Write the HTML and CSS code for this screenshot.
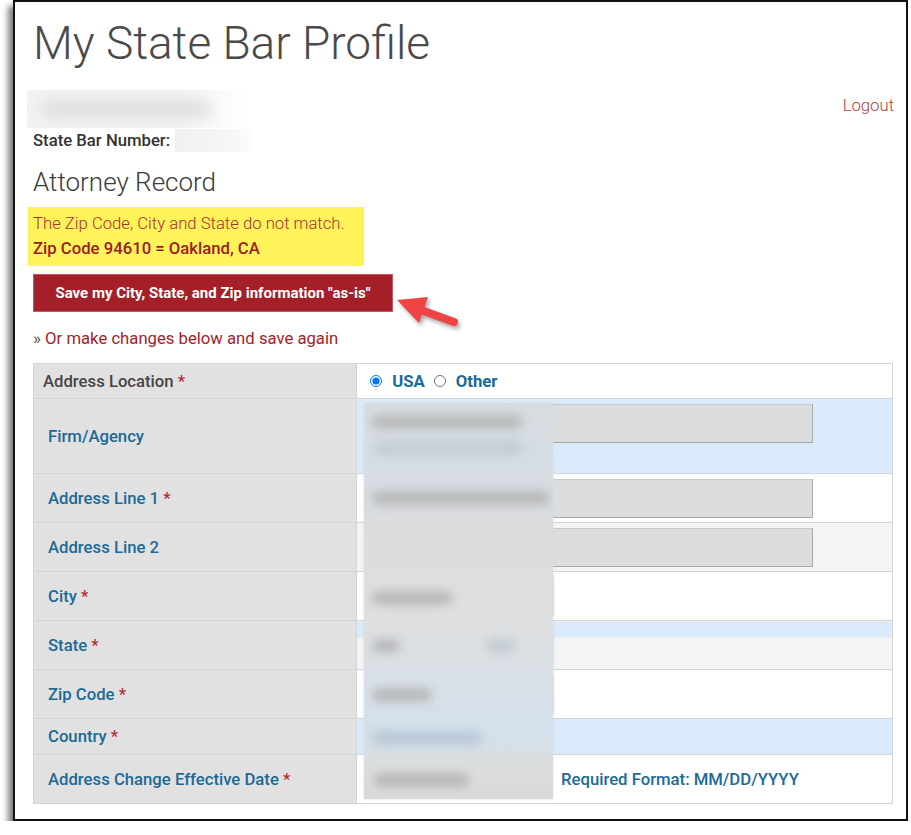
FILE: index.html
```html
<!DOCTYPE html>
<html lang="en">

<head>
  <meta charset="UTF-8">
  <meta name="viewport" content="width=device-width, initial-scale=1.0">
  <title>My State Bar Profile</title>
  <link rel="stylesheet" href="styles.css">
</head>

<body>
  <div class="frame">
    <div class="page">
      <h1 class="page-title">My State Bar Profile</h1>

      <div class="user-bar">
        <div class="user-name"><span class="smudge"></span></div>
        <a class="logout" href="#">Logout</a>
      </div>
      <div class="bar-number">State Bar Number: <span class="bar-number-value"></span></div>

      <h2 class="section-title">Attorney Record</h2>

      <div class="alert">
        <div class="alert-line">The Zip Code, City and State do not match.</div>
        <div class="alert-line strong">Zip Code 94610 = Oakland, CA</div>
      </div>

      <div class="actions">
        <button class="btn-save" type="button">Save my City, State, and Zip information "as-is"</button>
        <svg class="callout-arrow" width="66" height="36" viewBox="0 0 66 36">
          <line x1="26" y1="16" x2="59" y2="28" stroke="#f04444" stroke-width="8" stroke-linecap="round" />
          <polygon points="2,6 33,3 24,29" fill="#f04444" />
        </svg>
      </div>

      <p class="alt-action"><span class="raquo">&raquo;</span> <a href="#">Or make changes below and save again</a></p>

      <div class="record-wrap">
        <table class="record">
          <tr class="row-location">
            <th class="plain">Address Location <span class="req">*</span></th>
            <td>
              <label class="choice"><input type="radio" name="loc" checked> USA</label>
              <label class="choice"><input type="radio" name="loc"> Other</label>
            </td>
          </tr>
          <tr class="row-firm">
            <th>Firm/Agency</th>
            <td class="hl"><div class="field wide"></div></td>
          </tr>
          <tr class="row-std">
            <th>Address Line 1 <span class="req">*</span></th>
            <td><div class="field wide"></div></td>
          </tr>
          <tr class="row-std">
            <th>Address Line 2</th>
            <td class="alt"><div class="field wide"></div></td>
          </tr>
          <tr class="row-std">
            <th>City <span class="req">*</span></th>
            <td><div class="field"></div></td>
          </tr>
          <tr class="row-std">
            <th>State <span class="req">*</span></th>
            <td class="alt top-hl"><div class="field"></div></td>
          </tr>
          <tr class="row-std">
            <th>Zip Code <span class="req">*</span></th>
            <td><div class="field"></div></td>
          </tr>
          <tr class="row-country">
            <th>Country <span class="req">*</span></th>
            <td class="hl"></td>
          </tr>
          <tr class="row-std">
            <th>Address Change Effective Date <span class="req">*</span></th>
            <td class="date-cell"><span class="hint">Required Format: MM/DD/YYYY</span></td>
          </tr>
        </table>

        <!-- redacted values -->
        <div class="redact">
          <span class="blob" style="top: 12px; left: 8px; width: 150px;"></span>
          <span class="blob soft" style="top: 38px; left: 10px; width: 150px;"></span>
          <span class="blob" style="top: 88px; left: 8px; width: 178px;"></span>
          <span class="blob" style="top: 188px; left: 8px; width: 80px;"></span>
          <span class="blob" style="top: 236px; left: 8px; width: 28px;"></span>
          <span class="blob soft" style="top: 236px; left: 122px; width: 30px;"></span>
          <span class="blob" style="top: 285px; left: 8px; width: 60px;"></span>
          <span class="blob blue" style="top: 328px; left: 8px; width: 110px;"></span>
          <span class="blob" style="top: 370px; left: 10px; width: 95px;"></span>
        </div>
      </div>
    </div>
  </div>
</body>

</html>
```

FILE: styles.css
```css
body {
  margin: 0;
  background-color: white;
  font-family: Roboto, "Liberation Sans", Arial, sans-serif;
  color: #333;
}

.frame {
  box-sizing: border-box;
  width: 895px;
  height: 821px;
  margin-left: 13px;
  border: 2px solid #111;
  background-color: white;
  box-shadow: -5px 6px 6px rgba(0, 0, 0, 0.5);
}

.page {
  padding: 0 12px 0 18px;
}

.page-title {
  margin: 14px 0 0;
  font-size: 46px;
  font-weight: 300;
  line-height: 54px;
  color: #4a4a4a;
}

.user-bar {
  display: flex;
  align-items: center;
  justify-content: space-between;
  height: 36px;
  margin-top: 20px;
}

.user-name {
  align-self: flex-start;
  margin-left: -6px;
  width: 218px;
  height: 38px;
  background: linear-gradient(90deg, #f2f2f2 70%, rgba(255, 255, 255, 0));
  position: relative;
}

.smudge {
  position: absolute;
  left: 14px;
  top: 12px;
  width: 170px;
  height: 14px;
  background-color: #dcdcdc;
  border-radius: 7px;
  filter: blur(7px);
}

.logout {
  margin-bottom: 6px;
  font-size: 16.7px;
  font-weight: 300;
  color: #b04048;
  text-decoration: none;
}

.bar-number {
  margin-top: 3px;
  font-size: 16.7px;
  font-weight: 500;
  line-height: 24px;
  color: #333;
}

.bar-number-value {
  display: inline-block;
  width: 77px;
  height: 23px;
  margin-left: 1px;
  vertical-align: -6px;
  background: linear-gradient(90deg, #f0f0f0, #f6f6f6 70%, #fcfcfc);
}

.section-title {
  margin: 14px 0 0;
  font-size: 26px;
  font-weight: 300;
  line-height: 30px;
  color: #3a3a3a;
}

.alert {
  width: fit-content;
  margin: 10px 0 0 -5px;
  padding: 4px 20px 5px 5px;
  background-color: #fff35a;
  font-size: 16.7px;
  line-height: 25px;
}

.alert-line {
  font-weight: 300;
  color: #a83038;
}

.alert-line.strong {
  font-weight: 500;
  color: #9b1c24;
}

.actions {
  position: relative;
  margin-top: 8px;
  height: 38px;
}

.btn-save {
  box-sizing: border-box;
  width: 360px;
  height: 38px;
  padding: 0;
  border: 1px solid #c4565c;
  background-color: #a51f28;
  color: white;
  font-family: Roboto, "Liberation Sans", Arial, sans-serif;
  font-size: 15px;
  font-weight: 700;
}

.callout-arrow {
  position: absolute;
  left: 362px;
  top: 20px;
  filter: drop-shadow(2px 3px 2px rgba(0, 0, 0, 0.35));
}

.alt-action {
  margin: 14px 0 0;
  font-size: 16.7px;
  line-height: 24px;
}

.raquo {
  color: #555;
  font-size: 17px;
}

.alt-action a {
  color: #a3232b;
  text-decoration: none;
}

.record-wrap {
  position: relative;
  margin-top: 12px;
  width: 860px;
}

.record {
  width: 860px;
  border-collapse: collapse;
  border: 1px solid #d4d4d4;
}

.record th,
.record td {
  border: 1px solid #d4d4d4;
  padding: 0;
}

.record th {
  box-sizing: border-box;
  width: 323px;
  padding-left: 14px;
  background-color: #e1e1e1;
  text-align: left;
  font-size: 16.7px;
  font-weight: 500;
  color: #1b6a99;
}

.record th.plain {
  padding-left: 9px;
  color: #4a4444;
}

.req {
  color: #b42a33;
}

.record td {
  background-color: white;
  vertical-align: top;
  padding: 5px 8px 0;
}

.record td.hl {
  background-color: #d9ebfa;
}

.record td.alt {
  background-color: #f4f4f4;
}

.record td.top-hl {
  background: linear-gradient(#d9ebfa 16px, #f4f4f4 16px);
}

.row-location {
  height: 35px;
}

.row-location td {
  vertical-align: middle;
  padding-top: 0;
}

.row-firm {
  height: 75px;
}

.row-std {
  height: 49px;
}

.row-country {
  height: 36px;
}

.choice {
  font-size: 16.7px;
  font-weight: 700;
  color: #1b6a99;
}

.choice input {
  width: 12px;
  height: 12px;
  margin: 0 6px 0 5px;
  vertical-align: 0;
}

.field {
  box-sizing: border-box;
  width: 189px;
  height: 39px;
  background-color: #dcdddf;
}

.field.wide {
  width: 448px;
  border-right: 1px solid #a8a8a8;
  border-bottom: 1px solid #a8a8a8;
  border-top: 1px solid #c8c8c8;
}

.record td.date-cell {
  vertical-align: middle;
  padding-top: 0;
}

.hint {
  margin-left: 196px;
  font-size: 16.7px;
  font-weight: 500;
  color: #1b6a99;
}

.redact {
  position: absolute;
  left: 331px;
  top: 40px;
  width: 189px;
  height: 396px;
  overflow: hidden;
  background: linear-gradient(#d8dcdf, #d5dde5 14%, #dadcde 30%, #dedfe0 55%, #d3e0ec 84%, #dcdddd 92%, #d9d9d9);
  box-shadow: 0 0 3px rgba(220, 220, 220, 0.8);
}

.blob {
  position: absolute;
  height: 14px;
  border-radius: 7px;
  background-color: #b8b9ba;
  filter: blur(5px);
}

.blob.soft {
  background-color: #c4ccd4;
}

.blob.blue {
  background-color: #b9c9d6;
}
```
